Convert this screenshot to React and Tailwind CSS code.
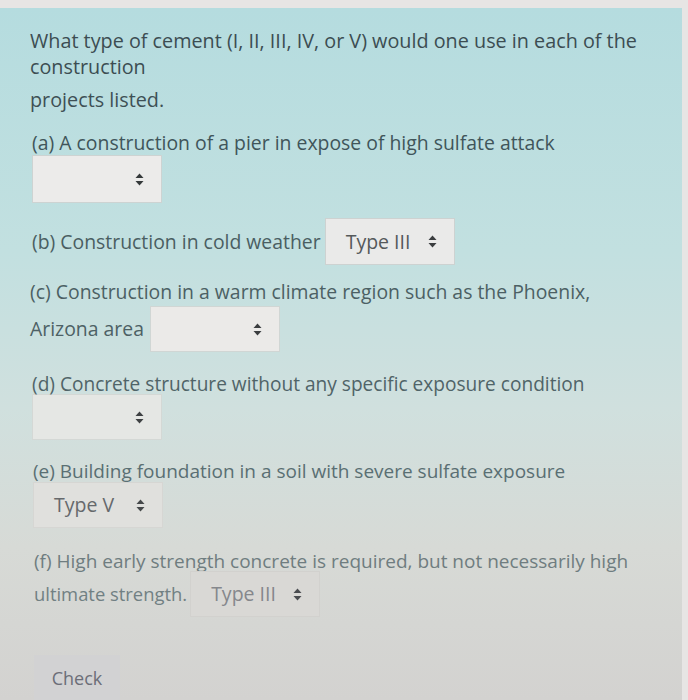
import React from "react"

// up/down chevrons shown at the right end of each dropdown
function SortArrows({ color = "#3b3d3f" }) {
  return (
    <svg width="9" height="13" viewBox="0 0 9 13" className="shrink-0">
      <path d="M4.5 0.5 L8.5 5 L0.5 5 Z" fill={color} />
      <path d="M4.5 12.5 L8.5 8 L0.5 8 Z" fill={color} />
    </svg>
  )
}

function Dropdown({ value, className, textColor, arrowColor, box }) {
  return (
    <div
      className={
        "flex items-center justify-between w-[130px] pl-[20px] pr-[17px] border text-[19.5px] " +
        box + " " + className
      }
    >
      <span className={textColor}>{value}</span>
      <SortArrows color={arrowColor} />
    </div>
  )
}

export default function App() {
  return (
    <div
      className="w-[688px] h-[700px] overflow-hidden bg-[#e7e5e4] pt-[8px]"
      style={{ fontFamily: '"Open Sans", "Liberation Sans", sans-serif' }}
    >
      <div className="w-[682px] h-[692px] bg-[linear-gradient(180deg,#b5dcdf_0%,#c2e0e0_35%,#d0e0de_58%,#d7dad6_78%,#d3d2d0_100%)] pl-[30px] pt-[20px] text-[19.4px]">

        {/* question */}
        <div className="text-[#3c4d52] leading-[26px] text-[19.8px]">
          <p>What type of cement (I, II, III, IV, or V) would one use in each of the</p>
          <p>construction</p>
        </div>
        <p className="mt-[8px] leading-[24px] text-[#3e5055] text-[19.8px]">projects listed.</p>

        {/* (a) */}
        <p className="mt-[21px] leading-[20px] text-[#40555a] pl-[2px]">
          (a) A construction of a pier in expose of high sulfate attack
        </p>
        <Dropdown
          value=""
          className="mt-[2px] ml-[2px] h-[48px]"
          box="bg-[#ecebea] border-[#cdd3d2]"
          arrowColor="#34383a"
        />

        {/* (b) */}
        <div className="mt-[15px] flex items-center pl-[2px]">
          <span className="leading-[20px] text-[#4a5e62]">(b) Construction in cold weather</span>
          <Dropdown
            value="Type III"
            className="ml-[4px] h-[47px]"
            box="bg-[#eaeae9] border-[#cdd2d1]"
            textColor="text-[#55595b]"
            arrowColor="#3a3d3f"
          />
        </div>

        {/* (c) */}
        <p className="mt-[17px] leading-[20px] text-[#4c6064]">
          (c) Construction in a warm climate region such as the Phoenix,
        </p>
        <div className="mt-[4px] flex items-center">
          <span className="leading-[20px] text-[#4d6165]">Arizona area</span>
          <Dropdown
            value=""
            className="ml-[6px] h-[46px]"
            box="bg-[#ebeae8] border-[#d0d6d4]"
            arrowColor="#3a3d3f"
          />
        </div>

        {/* (d) */}
        <p className="mt-[22px] leading-[20px] text-[#506468] pl-[2px] text-[19.1px]">
          (d) Concrete structure without any specific exposure condition
        </p>
        <Dropdown
          value=""
          className="ml-[2px] h-[46px]"
          box="bg-[#e5e7e4] border-[#d4d8d5]"
          arrowColor="#3e4143"
        />

        {/* (e) */}
        <p className="mt-[21px] leading-[20px] text-[#5a6f73] pl-[3px] text-[19px]">
          (e) Building foundation in a soil with severe sulfate exposure
        </p>
        <Dropdown
          value="Type V"
          className="mt-[1px] ml-[3px] h-[46px]"
          box="bg-[#e0e0dd] border-[#d6d6d3]"
          textColor="text-[#66696c]"
          arrowColor="#45484a"
        />

        {/* (f) */}
        <p className="mt-[23px] leading-[20px] text-[#6f7d80] pl-[4px] text-[19px]">
          (f) High early strength concrete is required, but not necessarily high
        </p>
        <div className="flex items-center pl-[4px] text-[18.4px]">
          <span className="leading-[20px] text-[#718083]">ultimate strength.</span>
          <Dropdown
            value="Type III"
            className="ml-[3px] h-[46px]"
            box="bg-[#d9d8d5] border-[#d2d1ce]"
            textColor="text-[#85878c]"
            arrowColor="#4a4c50"
          />
        </div>

        {/* check button */}
        <div className="mt-[38px] ml-[4px] w-[86px] h-[46px] bg-[#d2d2d3] flex items-center justify-center text-[#6c6e78] text-[18px]">
          Check
        </div>
      </div>
    </div>
  )
}
